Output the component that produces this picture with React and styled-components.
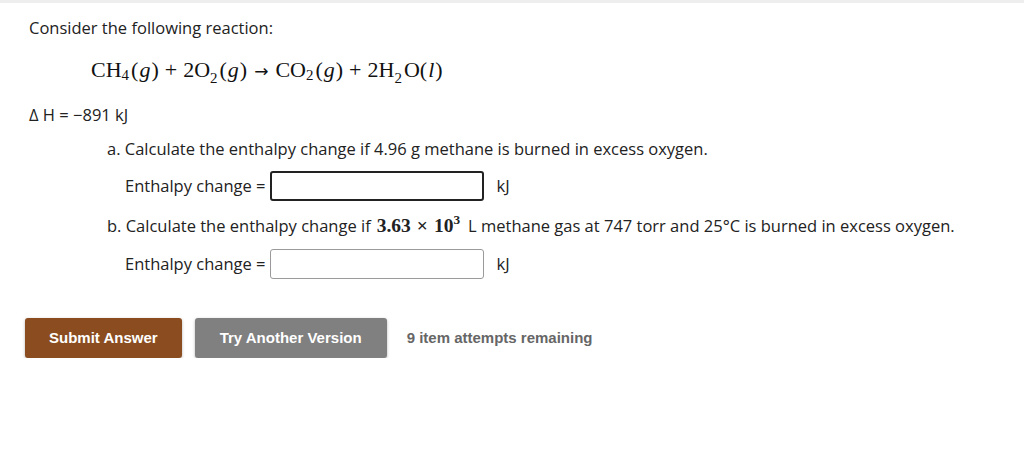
import styled, { createGlobalStyle } from 'styled-components'

const GlobalStyle = createGlobalStyle`
  html, body {
    margin: 0;
    padding: 0;
    background: #fff;
  }
  body {
    font-family: "Open Sans", "Liberation Sans", sans-serif;
    color: #222;
  }
`

const Page = styled.div`
  border-top: 3px solid #eeeeee;
  padding: 14px 29px 0;
  font-size: 16.5px;
  line-height: 22px;
`

const Para = styled.p`
  margin: 0;
  padding-left: ${(p) => p.indent || 0}px;
  margin-top: ${(p) => p.top || 0}px;
`

const Equation = styled.div`
  font-family: "Liberation Serif", "DejaVu Serif", serif;
  font-size: 22px;
  line-height: 28px;
  padding-left: 62px;
  margin-top: 17px;
  color: #111;
  white-space: nowrap;
`

const Op = styled.span`
  margin: 0 ${(p) => p.gap || 6}px;
`

const Arrow = styled.span`
  font-family: "DejaVu Sans", sans-serif;
  font-size: 17px;
  margin: 0 7px 0 7px;
`

const Math = styled.span`
  font-family: "Liberation Serif", "DejaVu Serif", serif;
  font-weight: bold;
  font-size: 19.5px;
  margin: 0 8px 0 6px;
`

const It = styled.i`
  font-style: italic;
  margin: 0 1px;
`

const Sub = styled.sub`
  font-size: 0.68em;
  vertical-align: ${(p) => (p.low ? '-0.4em' : '-0.2em')};
  line-height: 0;
  margin-right: 2px;
`

const Sup = styled.sup`
  font-size: 0.68em;
  vertical-align: 0.6em;
  line-height: 0;
`

const AnswerRow = styled.div`
  display: flex;
  align-items: center;
  padding-left: 96px;
  margin-top: ${(p) => p.top || 0}px;
`

const Field = styled.div`
  width: 214px;
  height: 30px;
  box-sizing: border-box;
  margin-left: 4px;
  border-radius: 3px;
  border: ${(p) => (p.focused ? '2px solid #222' : '1px solid #9a9a9a')};
  background: #fff;
`

const Unit = styled.span`
  margin-left: 13px;
`

const Actions = styled.div`
  display: flex;
  align-items: center;
  gap: 13px;
  margin-top: 39px;
  margin-left: -4px;
  font-family: "Liberation Sans", Arial, sans-serif;
  font-weight: bold;
  font-size: 15px;
`

const Button = styled.div`
  height: 40px;
  box-sizing: border-box;
  padding: 0 ${(p) => p.pad}px;
  display: flex;
  align-items: center;
  border-radius: 3px;
  color: #fff;
  background: ${(p) => p.bg};
  box-shadow: 0 1px 3px rgba(0, 0, 0, 0.3);
`

const Remaining = styled.span`
  color: #666;
  margin-left: 7px;
`

export default function App() {
  return (
    <>
      <GlobalStyle />
      <Page>
        <Para>Consider the following reaction:</Para>
        <Equation>
          CH<Sub>4</Sub>(<It>g</It>)<Op>+</Op>2O<Sub low>2</Sub>(<It>g</It>)<Arrow>→</Arrow>CO<Sub>2</Sub>(<It>g</It>)<Op>+</Op>2H<Sub low>2</Sub>O(<It>l</It>)
        </Equation>
        <Para top={19}>Δ H = −891 kJ</Para>
        <Para indent={78} top={12}>
          a. Calculate the enthalpy change if 4.96 g methane is burned in excess oxygen.
        </Para>
        <AnswerRow top={11}>
          Enthalpy change =<Field focused />
          <Unit>kJ</Unit>
        </AnswerRow>
        <Para indent={78} top={14}>
          b. Calculate the enthalpy change if
          <Math>
            3.63<Op gap={6}>×</Op>10<Sup>3</Sup>
          </Math>
          L methane gas at 747 torr and 25°C is burned in excess oxygen.
        </Para>
        <AnswerRow top={12}>
          Enthalpy change =<Field />
          <Unit>kJ</Unit>
        </AnswerRow>
        <Actions>
          <Button bg="#8b4d20" pad={24}>Submit Answer</Button>
          <Button bg="#808080" pad={25}>Try Another Version</Button>
          <Remaining>9 item attempts remaining</Remaining>
        </Actions>
      </Page>
    </>
  )
}
